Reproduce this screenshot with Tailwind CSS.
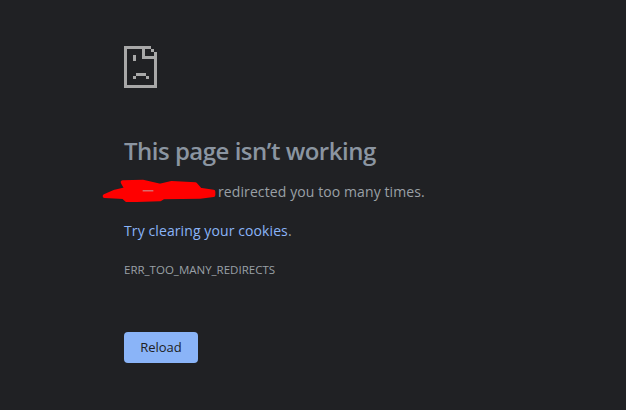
<!DOCTYPE html>
<html><head><meta charset="utf-8"><script src="https://cdn.jsdelivr.net/npm/@tailwindcss/browser@4"></script></head>
<body class="m-0 h-[410px] w-[626px] overflow-hidden bg-[#202124] font-['Open_Sans','Noto_Sans',sans-serif] text-[#9aa0a6]">
<main class="relative flex h-[410px] flex-col items-start pl-[124px] pt-[46px]">
<svg class="h-[42px] w-[33px]" viewBox="0 0 33 42" shape-rendering="crispEdges" fill="#a8a8a8" aria-hidden="true">
<path d="M0 0h27v3H3v36h27V6h3v36H0z"/><path d="M27 3h3v3h-3z"/><path d="M18 0h3v10h12v3H18z"/>
<path d="M9 9h3v6H9z"/><path d="M12 27h10v3H12zM9 30h3v3H9zM22 30h3v3h-3z"/>
</svg>
<h1 class="mt-[47px] text-[24px] font-semibold leading-[32px] tracking-[-0.5px] text-[#8b95a1]">This page isn’t working</h1>
<p class="mt-[15px] pl-[94px] text-[14px] leading-[20px] tracking-[0.1px] text-[#9aa0a6]">redirected you too many times.</p>
<p class="mt-[19px] text-[14px] leading-[20px] tracking-[0.1px]"><span class="text-[#8ab4f8]">Try clearing your cookies</span>.</p>
<p class="mt-[21px] text-[11.5px] leading-[16px] text-[#9aa0a6]">ERR_TOO_MANY_REDIRECTS</p>
<button class="mt-[54px] h-[31px] w-[74px] rounded-[4px] bg-[#8ab4f8] text-[13px] font-medium text-[#202124]">Reload</button>
<svg class="absolute left-[100px] top-[175px] h-[30px] w-[125px]" viewBox="0 0 375 90" aria-hidden="true"><path d="M68 22 L128 20 L180 32 L215 24 L286 28 L300 44 L340 50 L340 60 L300 65 L190 67 L180 73 L110 75 L80 75 L70 66 L14 63 L45 50 L80 42 L74 32 Z" fill="#f00" stroke="#f00" stroke-width="12" stroke-linejoin="round"/><path d="M128 46h32v3h-32z" fill="#c9a0a0"/></svg>
</main>
</body></html>
